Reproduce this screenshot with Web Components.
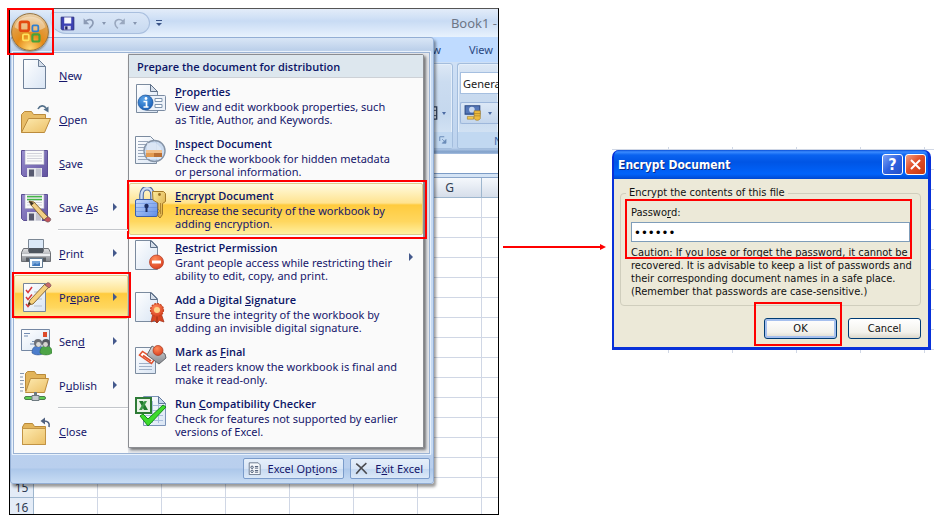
<!DOCTYPE html>
<html lang="en">
<head>
<meta charset="utf-8">
<title>Encrypt a workbook</title>
<style>
  body{
    margin: 0;
    background: #fff;
    font-family: "Noto Sans", "Open Sans", sans-serif;
    font-size: 11px;
    color: #15166b;
  }
  main{
    display: grid;
    grid-template-columns: 490fr 113fr 322fr;
    padding: 8px 11px 0 9px;
    align-items: start;
  }
  step-arrow{ margin-top: 235px; }
  encrypt-dialog{ margin-top: 139px; }
</style>
</head>
<body>
<main>
  <excel-window></excel-window>
  <step-arrow></step-arrow>
  <encrypt-dialog></encrypt-dialog>
</main>

<script>
const page = `<path d="M4.500 1.500h15l7 7v22h-22z" transform="translate(-1 -1)" fill="url(#pg)" stroke="#6f8199"/><path d="M18.500.500v7h7z" fill="#d5deea" stroke="#6f8199" stroke-linejoin="round"/>`;
const smallPage = `<path d="M.500 1.500h16l6 6v23h-22z" fill="url(#pg)" stroke="#7b8b9f"/><path d="M15.500 1.500v7h7z" fill="#d5deea" stroke="#5f7088" stroke-linejoin="round"/>`;
const floppy = `<path d="M1.500 3.500h26v26h-24l-2-2z" fill="url(#vi)" stroke="#5c4f94"/><path d="M5 3.500h19v14H5z" fill="#fafafa" stroke="#aaa9c0" stroke-width=".6"/><path d="M7 6.500h15M7 9h15M7 11.500h15M7 14h15" stroke="#d2d2da"/><path d="M7 21h15v9H7z" fill="#e3e4ea"/><path d="M9 22.500h5v7H9z" fill="#575a70"/><path d="M16 21.500h5v8h-5z" fill="#c2c4d0"/>`;

// every picture is drawn on a 32 x 32 box
const icons = {
  new: page,
  open: `<path d="M1.500 29.500v-18l3-3h7l2 3h12v5" fill="#e8bd68" stroke="#bb8b3c"/><path d="M1.500 29.500l7-14h22l-6 14z" fill="url(#fo)" stroke="#bb8b3c"/><path d="M18 6c2-4 6-4 8-1" fill="none" stroke="#54708a" stroke-width="1.600"/><path d="M23.500 6.500l5-3v6z" fill="#54708a"/>`,
  save: floppy,
  saveas: floppy + `<path d="M7 8.500h15M7 5.500h15" stroke="#45b649" stroke-width="1.300"/><path d="M9 10l5 1 14 15-4 3-13-15z" fill="#f2cf84" stroke="#7e5c2a" stroke-width=".9"/><path d="M9 10l5 2-2.500 2.500z" fill="#3b3024"/><path d="M24 29l4-3.500 2.500 2c1 2-1.500 4-3.500 3.500z" fill="#c3535a" stroke="#6d5a5d" stroke-width=".7"/>`,
  print: `<path d="M8.500 12V2.500h15V12z" fill="#dbe8f7" stroke="#7b8794"/><path d="M3.500 11.500h5v3h15v-3h5l2 4v9h-29v-9z" fill="url(#gr)" stroke="#6c6f74"/><path d="M9 11h14v5H9z" fill="#4e555e"/><path d="M2 17h28v2H2z" fill="#eceef0"/><path d="M6 20.500h20v4H6z" fill="#565b61"/><path d="M9.500 21.500h13v9h-13z" fill="#fafdff" stroke="#60788f"/><path d="M12 24h8v5h-8z" fill="#7aa7d9"/><path d="M12 29l3-3 2 1.500 3-2v3.500z" fill="#3e78bd"/>`,
  prepare: `<path d="M3.500 2.500h22v28h-22z" fill="url(#pg)" stroke="#77869a"/><path d="M6 9l2 2.500L12 6M6 16l2 2.500 4-5M6 23l2 2.500 4-5" fill="none" stroke="#d8383b" stroke-width="1.500"/><path d="M14 11h8M14 18h8M14 25h8" stroke="#b8c1cf"/><path d="M8 24l2-5L25 3l4 3-16 17z" fill="#f6d17d" stroke="#80602c" stroke-width=".9"/><path d="M8 24l1-3 2 1.500z" fill="#33291d"/><path d="M25 4l2-2c2-1 4 1 4 3l-2 2z" fill="#c8686b" stroke="#735357" stroke-width=".7"/>`,
  send: `<path d="M1.500 4.500h28v21h-28z" fill="url(#pg)" stroke="#7487a3"/><path d="M4 8.500h6M4 11h4M12 16.500h10M10 19h7" stroke="#728cb2" stroke-width="1.200"/><path d="M23 7h4v5h-4z" fill="#dc4a2b"/><path d="M12 28c0-5 2-7 6-7s6 2 6 7c-3 2.500-9 2.500-12 0z" fill="#4c7dcc" stroke="#2d5390" stroke-width=".6"/><circle cx="18" cy="18" r="4" fill="#6c6f76"/><circle cx="18.500" cy="19.500" r="2.400" fill="#dcdbd8"/><path d="M20 28c0-5 2-7 6-7s6 2 6 7c-3 2.500-9 2.500-12 0z" fill="#4da446" stroke="#2c7529" stroke-width=".6"/><circle cx="26" cy="18" r="4" fill="#555960"/><circle cx="25.500" cy="19.500" r="2.400" fill="#d6d4cf"/>`,
  publish: `<path d="M0 4.500h4M0 8h3M0 11.500h4M0 15h3M0 18.500h4M0 22h3" stroke="#8596ae"/><path d="M5.500 22V4.500l2-2h7l2 3h9v4" fill="#e2b45a" stroke="#b98a3a"/><path d="M5.500 23.500l5-14h18l-4 14z" fill="url(#fo)" stroke="#bb8b3c"/><path d="M15.500 23v6" stroke="#6e7a80" stroke-width="3"/><rect x="4.500" y="27.500" width="21" height="3" rx="1.500" fill="#5fcf52" stroke="#4c7b4e"/><path d="M12 26.500h7v5h-7z" fill="#c3c9ce" stroke="#6e7a80"/>`,
  close: `<path d="M2.500 12l2-3.500h8l2 3h11v18h-23z" fill="#e2b45a" stroke="#b98a3a"/><path d="M2.500 13.500h23v16h-23z" fill="url(#fo)" stroke="#c19344"/><path d="M29 12c1-4-1-6-5-6" fill="none" stroke="#4e6080" stroke-width="1.600"/><path d="M25 2.500v7L20.500 6z" fill="#4e6080"/>`,
  properties: `<path d="M1.500 1.500h14l7 7v21h-21z" fill="url(#pg)" stroke="#7b8b9f"/><path d="M15.500 1.500v7h7z" fill="#d5deea" stroke="#5f7088"/><rect x="10.500" y="12.500" width="20" height="15" rx="1" fill="#edf2f9" stroke="#7b8ca3"/><path d="M20 15.500h7v3h-7zM20 21.500h7v3h-7z" fill="#fff" stroke="#7d93ad"/><circle cx="10.500" cy="19.500" r="7.500" fill="url(#bl)" stroke="#1a5198" stroke-width=".7"/><circle cx="11" cy="15.500" r="1.400" fill="#fff"/><path d="M8.500 18.500h3v5M8.500 24h5" fill="none" stroke="#fff" stroke-width="1.700"/>`,
  inspect: `<path d="M.500 1.500h15l6 6v21h-21z" fill="url(#pg)" stroke="#7b8b9f"/><path d="M3 6.500h10M3 9.500h10M3 12.500h8M3 15.500h8M3 18.500h8M3 21.500h9M3 24.500h12" stroke="#9aa7ba"/><circle cx="19.500" cy="16" r="10.500" fill="#c4d6ee" fill-opacity=".88" stroke="#8593a6" stroke-width="1.400"/><path d="M12 8h9l5 5v11H12z" fill="#e8eff8" fill-opacity=".6"/><path d="M11 15h16v7H11z" fill="#e19a52"/><path d="M11 15h16v3H11z" fill="#f2c08b"/><path d="M19 18h8v4h-8z" fill="#b96f35"/>`,
  encrypt: `<path d="M6.500 14V8c0-9 11-9 11 0v6" fill="none" stroke="#4a6aa6" stroke-width="4.600"/><path d="M6.500 14V8c0-9 11-9 11 0v6" fill="none" stroke="#cfdcf2" stroke-width="2.400"/><rect x=".500" y="12.500" width="22" height="17" rx="1.500" fill="url(#lk)" stroke="#3b5fae"/><path d="M1 16.500h21M1 20.500h21M1 24.500h21" stroke="#5b86dc" stroke-opacity=".5"/><circle cx="11.500" cy="19" r="2.200" fill="#1c2d62"/><path d="M10.500 19h2v6h-2z" fill="#1c2d62"/><path d="M17.500 4.500h11l2 2v8l-3 2v11l-2.500 3.500-2-2v-3l1.500-2-1.500-2v-6l-5-3z" fill="url(#ky)" stroke="#a57a26"/><circle cx="24.500" cy="7.500" r="1.400" fill="#9a6f22"/><path d="M25.500 16v11" stroke="#b2862f"/>`,
  restrict: smallPage + `<circle cx="21.500" cy="23" r="7" fill="url(#rd)" stroke="#b3371f" stroke-width=".7"/><path d="M17 21.500h9v3h-9z" fill="#fff"/>`,
  signature: smallPage + `<path d="M18 22l-2 9 3.500-1.500L22 32v-7 7l2.500-2.500L29 31l-3-9z" fill="#d84622" stroke="#a03119" stroke-width=".7"/><circle cx="22" cy="19" r="6.500" fill="url(#rd)" stroke="#c4431f" stroke-width="1.200" stroke-dasharray="2 1"/><circle cx="22" cy="19" r="3" fill="#ffd489"/>`,
  final: `<path d="M.500 4.500h20v26h-20z" fill="url(#pg)" stroke="#7b8b9f"/><path d="M4 20.500h13M4 23.500h13M4 26.500h13" stroke="#9fb0c7"/><path d="M4.500 12l3-3.500 12 8-3 4z" fill="#fff" stroke="#e2502d" stroke-width="1.500"/><path d="M8 12.500l8 5.500" stroke="#e2502d" stroke-width="2"/><path d="M17 3l13 8 1 4-7 6-12-9z" fill="url(#gr)" stroke="#65686d"/><circle cx="23" cy="7.500" r="5" fill="url(#rd)" stroke="#a8351b" stroke-width=".7"/>`,
  compat: `<path d="M8.500 1.500h15l7 7v22h-22z" fill="url(#pg)" stroke="#7b93b8"/><path d="M23.500 1.500v7h7z" fill="#c6d6ec" stroke="#62799d"/><path d="M10 10.500h18M10 15.500h18M10 20.500h18M10 25.500h18M17.500 6v22M23.500 9v19" stroke="#a9bedd"/><rect x="1" y="3" width="15" height="15" fill="#eaf3e8" stroke="#2d7a35" stroke-width="2"/><path d="M4 6h4l5 9H9z" fill="#217a2c"/><path d="M12 6H9.500L4 15h3z" fill="#3c9947"/><path d="M5 21l3-2 5 5L28 10l3 2-18 19z" fill="#3ddb2c" stroke="#178a1b"/>`,
  office: `<circle cx="16" cy="16" r="15.500" fill="url(#ob)" stroke="#8f6a35" stroke-width=".8"/><path d="M3 12C6 0 26 0 29 12c-7 5-19 5-26 0z" fill="#fff" fill-opacity=".38"/><g fill="none"><rect x="7.500" y="7.500" width="7.500" height="7.500" rx="1.500" stroke="#e34a10" stroke-width="2.200"/><rect x="18" y="10.500" width="5" height="5" rx="1" stroke="#2f7fd0" stroke-width="1.500"/><rect x="10" y="18" width="5" height="5" rx="1" stroke="#ffe25c" stroke-width="1.500"/><rect x="18" y="18" width="6" height="6" rx="1.300" stroke="#48a33a" stroke-width="1.800"/></g>`,
  disk: `<path d="M2.500 2.500h27v27h-25l-2-2z" fill="#3c41b4" stroke="#272b7e" stroke-width="2"/><path d="M9 3h15v13H9z" fill="#f7f8ff"/><path d="M9 21h14v8H9z" fill="#d6d8ef"/><path d="M11 22h5v7h-5z" fill="#20235e"/>`,
  undo: `<path d="M9 10c10-7 19-3 18 6-1 6-5 9-9 12" fill="none" stroke="#8c9bb5" stroke-width="4"/><path d="M4 3v15h14z" fill="#8c9bb5"/>`,
  redo: `<path d="M25 10C15 3 5 6 5 16c0 6 3 9 7 12" fill="none" stroke="#9aa8bf" stroke-width="4"/><path d="M29 3v15H15z" fill="#9aa8bf"/>`,
  currency: `<path d="M2 3h26v15H2z" fill="#5577b8" stroke="#2f4c86" stroke-width="2"/><circle cx="14" cy="10" r="5" fill="#c6d7f1"/><path d="M18 12h11v14c-3 4-8 4-11 0z" fill="#edbb3e" stroke="#9b7421"/><path d="M18 17h11M18 21h11" stroke="#9b7421"/><path d="M6 22h11v5H6z" fill="#f3c94f" stroke="#9b7421"/>`,
  merge: `<path d="M2 2h27v28H2z" fill="#e9f1fb" stroke="#33415c" stroke-width="3"/><path d="M2 10h27M2 22h27" stroke="#33415c" stroke-width="2"/>`,
  options: `<path d="M3 2h22l5 5v24H3z" fill="#f5f8fc" stroke="#55647a" stroke-width="2"/><circle cx="10" cy="13" r="3" fill="none" stroke="#2d3f5c" stroke-width="2"/><circle cx="10" cy="23" r="3" fill="none" stroke="#2d3f5c" stroke-width="2"/><path d="M17 11h8M17 15h8M17 21h8M17 25h8" stroke="#2d3f5c" stroke-width="2"/>`,
  exit: `<path d="M3 4c9 7 16 14 26 25M28 3C18 11 11 19 3 29" fill="none" stroke="#4b4b50" stroke-width="4"/>`,
  launcher: `<path d="M3 20V3h18" fill="none" stroke="#6a8bb8" stroke-width="4"/><path d="M12 12l12 12M28 14v15H13z" fill="#6a8bb8" stroke="#6a8bb8" stroke-width="3"/>`
};

const gradients = `
<linearGradient id="pg" x2="1" y2="1"><stop stop-color="#fff"/><stop offset="1" stop-color="#d9e5f4"/></linearGradient>
<linearGradient id="vi" x2="1" y2="1"><stop stop-color="#9a8fd0"/><stop offset="1" stop-color="#6253a0"/></linearGradient>
<linearGradient id="fo" x2="1" y2="1"><stop stop-color="#fdeab0"/><stop offset="1" stop-color="#ecc066"/></linearGradient>
<linearGradient id="gr" x2="0" y2="1"><stop stop-color="#dfe0e2"/><stop offset="1" stop-color="#84888e"/></linearGradient>
<linearGradient id="lk" x2="1" y2="1"><stop stop-color="#c8dafb"/><stop offset="1" stop-color="#5c8be6"/></linearGradient>
<linearGradient id="ky" x2="1" y2="1"><stop stop-color="#fdeb9c"/><stop offset="1" stop-color="#d5a238"/></linearGradient>
<radialGradient id="bl" cx=".4" cy=".3" r=".8"><stop stop-color="#5ba5ea"/><stop offset="1" stop-color="#1257b0"/></radialGradient>
<radialGradient id="rd" cx=".4" cy=".3" r=".8"><stop stop-color="#ff8c5a"/><stop offset="1" stop-color="#d63a1c"/></radialGradient>
<radialGradient id="ob" cx=".5" cy=".95" r=".95"><stop stop-color="#ffd873"/><stop offset=".4" stop-color="#e58a17"/><stop offset=".75" stop-color="#e0a04a"/><stop offset="1" stop-color="#ead9bd"/></radialGradient>`;

class AppIcon extends HTMLElement{
  constructor(){
    super();
    this.attachShadow({mode:"open"});
  }
  connectedCallback(){
    const size = this.getAttribute("size") || 32;
    this.shadowRoot.innerHTML = `
      <style>
        :host{ display: block; flex: none; width: ${size}px; height: ${size}px; }
        svg{ display: block; }
      </style>
      <svg width="${size}" height="${size}" viewBox="0 0 32 32" aria-hidden="true"><defs>${gradients}</defs>${icons[this.getAttribute("name")]}</svg>`;
  }
}
customElements.define("app-icon", AppIcon);

// red outline laid over whatever the reader has to click
class RedFrame extends HTMLElement{
  constructor(){
    super();
    this.attachShadow({mode:"open"});
    this.shadowRoot.innerHTML = `
      <style>
        :host{ display: block; position: absolute; z-index: 5; border: 2px solid #f00; box-sizing: border-box; pointer-events: none; }
      </style>`;
  }
}
customElements.define("red-frame", RedFrame);

class StepArrow extends HTMLElement{
  constructor(){
    super();
    this.attachShadow({mode:"open"});
    this.shadowRoot.innerHTML = `
      <style>
        :host{ display: flex; align-items: center; height: 7px; padding: 0 6px 0 4px; }
        .line{ flex: 1; height: 2px; background: #f00; }
        .head{ border: 3px solid transparent; border-left: 6px solid #f00; border-right: 0; }
      </style>
      <div class="line"></div><div class="head"></div>`;
  }
}
customElements.define("step-arrow", StepArrow);

class MenuItem extends HTMLElement{
  constructor(){
    super();
    this.attachShadow({mode:"open"});
  }
  connectedCallback(){
    this.shadowRoot.innerHTML = `
      <style>
        :host{ display: block; position: relative; }
        button{
          display: flex; align-items: center; gap: 7px;
          width: 100%; height: 44px; box-sizing: border-box;
          padding: 0 10px 0 5px; border: 1px solid transparent; border-radius: 2px;
          background: none; font: inherit; color: inherit; text-align: left;
        }
        .label{ flex: 1; white-space: nowrap; }
        .more{ border: 4px solid transparent; border-left: 4px solid #44598c; border-right: 0; }
        :host([active]) button{
          border-color: #e3cf8c;
          background: linear-gradient(#fffbe0, #ffe38f 38%, #ffcb3e 42%, #ffd75f 75%, #fff0a0);
        }
        hr{ margin: 0 0 0 44px; border: 0; border-top: 1px solid #c3c6cb; border-bottom: 1px solid #fff; }
        red-frame{ inset: -3px -3px 1px -2px; }
      </style>
      <button type="button">
        <app-icon name="${this.getAttribute("icon")}"></app-icon>
        <span class="label"><slot></slot></span>
        ${this.hasAttribute("more") ? `<span class="more"></span>` : ""}
      </button>
      ${this.hasAttribute("divided") ? "<hr>" : ""}
      ${this.hasAttribute("active") ? "<red-frame></red-frame>" : ""}`;
  }
}
customElements.define("menu-item", MenuItem);

class TaskItem extends HTMLElement{
  constructor(){
    super();
    this.attachShadow({mode:"open"});
  }
  connectedCallback(){
    this.shadowRoot.innerHTML = `
      <style>
        :host{ display: block; position: relative; }
        button{
          display: flex; gap: 8px;
          width: 100%; height: 52px; box-sizing: border-box;
          padding: 3px 9px 0 5px; border: 1px solid transparent; border-radius: 2px;
          background: none; font: inherit; color: inherit; text-align: left;
        }
        .text{ flex: 1; white-space: nowrap; }
        .title{ display: block; font: 600 11px/17px "Open Sans", "Noto Sans", sans-serif; color: #0b1566; }
        .about{ display: block; line-height: 13px; white-space: pre-line; }
        .more{ margin-top: 14px; align-self: flex-start; border: 4px solid transparent; border-left: 4px solid #44598c; border-right: 0; }
        :host([active]) button{
          border-color: #dfcc8a;
          background: linear-gradient(#fffbe0, #ffe38f 38%, #ffcb3e 42%, #ffd75f 75%, #fff0a0);
        }
        red-frame{ inset: -3px -4px -4px -2px; }
      </style>
      <button type="button">
        <app-icon name="${this.getAttribute("icon")}"></app-icon>
        <span class="text">
          <span class="title"><slot name="title"></slot></span>
          <span class="about"><slot></slot></span>
        </span>
        ${this.hasAttribute("more") ? `<span class="more"></span>` : ""}
      </button>
      ${this.hasAttribute("active") ? "<red-frame></red-frame>" : ""}`;
  }
}
customElements.define("task-item", TaskItem);

class OfficeMenu extends HTMLElement{
  constructor(){
    super();
    this.attachShadow({mode:"open"});
    this.shadowRoot.innerHTML = `
      <style>
        :host{
          display: block; box-sizing: border-box; padding: 0 3px 0 2px;
          border: 1px solid #93aed4; border-radius: 3px;
          background: linear-gradient(#d9e6f6, #bcd0ea 12px, #c6daf3 16px, #c6daf3 calc(100% - 30px), #bad0ee calc(100% - 28px), #b9cfee calc(100% - 15px), #acc7ea calc(100% - 14px), #c8dcf4);
          box-shadow: 2px 3px 3px rgba(0,0,0,.4);
        }
        .cap{ height: 14px; }
        .body{
          display: grid; grid-template-columns: 114px 1fr;
          border: 1px solid #9bb3d4; background: #fafafa;
          box-shadow: 0 0 0 1px #e9f2fc;
        }
        .side{ padding: 1px 5px 5px 0; background: #e6e8ec; position: relative; z-index: 1; }
        .panel{ border: 1px solid #8b8d92; background: #fafafa; box-shadow: 2px 2px 3px rgba(0,0,0,.5); border-radius: 0 2px 0 0; }
        h2{
          margin: 0 0 1px; padding: 0 8px; height: 22px;
          border-bottom: 1px solid #cdd1d6; background: #dde7ee;
          font: 600 11px/23px "Open Sans", "Noto Sans", sans-serif; color: #0b1566;
        }
        .tasks{ padding-bottom: 4px; }
        nav{ position: relative; z-index: 2; }
        footer{ display: flex; justify-content: flex-end; gap: 6px; padding: 4px 0; }
        footer button{
          display: flex; align-items: center; gap: 7px; height: 21px; padding: 0 6px 0 4px;
          border: 1px solid #7b9ccb; border-radius: 2px;
          background: linear-gradient(#e6effa, #d9e6f7 50%, #c6d9f1 52%, #dce9f8);
          font: inherit; color: inherit; white-space: nowrap;
        }
      </style>
      <div class="cap"></div>
      <div class="body">
        <nav>
          <menu-item icon="new"><u>N</u>ew</menu-item>
          <menu-item icon="open"><u>O</u>pen</menu-item>
          <menu-item icon="save"><u>S</u>ave</menu-item>
          <menu-item icon="saveas" more divided>Save <u>A</u>s</menu-item>
          <menu-item icon="print" more><u>P</u>rint</menu-item>
          <menu-item icon="prepare" more active>Pr<u>e</u>pare</menu-item>
          <menu-item icon="send" more>Sen<u>d</u></menu-item>
          <menu-item icon="publish" more divided>P<u>u</u>blish</menu-item>
          <menu-item icon="close"><u>C</u>lose</menu-item>
        </nav>
        <div class="side">
          <div class="panel">
            <h2>Prepare the document for distribution</h2>
            <div class="tasks">
              <task-item icon="properties"><span slot="title"><u>P</u>roperties</span>View and edit workbook properties, such
as Title, Author, and Keywords.</task-item>
              <task-item icon="inspect"><span slot="title"><u>I</u>nspect Document</span>Check the workbook for hidden metadata
or personal information.</task-item>
              <task-item icon="encrypt" active><span slot="title"><u>E</u>ncrypt Document</span>Increase the security of the workbook by
adding encryption.</task-item>
              <task-item icon="restrict" more><span slot="title"><u>R</u>estrict Permission</span>Grant people access while restricting their
ability to edit, copy, and print.</task-item>
              <task-item icon="signature"><span slot="title">Add a Digital <u>S</u>ignature</span>Ensure the integrity of the workbook by
adding an invisible digital signature.</task-item>
              <task-item icon="final"><span slot="title">Mark as <u>F</u>inal</span>Let readers know the workbook is final and
make it read-only.</task-item>
              <task-item icon="compat"><span slot="title">Run <u>C</u>ompatibility Checker</span>Check for features not supported by earlier
versions of Excel.</task-item>
            </div>
          </div>
        </div>
      </div>
      <footer>
        <button type="button"><app-icon name="options" size="13"></app-icon><span>Excel Opt<u>i</u>ons</span></button>
        <button type="button"><app-icon name="exit" size="13"></app-icon><span>E<u>x</u>it Excel</span></button>
      </footer>`;
  }
}
customElements.define("office-menu", OfficeMenu);

class SheetGrid extends HTMLElement{
  constructor(){
    super();
    this.attachShadow({mode:"open"});
  }
  connectedCallback(){
    // the menu covers everything else, so only these heads carry a label
    const cols = ["", "", "", "", "", "", "G", ""];
    let rows = "";
    for(let i = 1; i <= 16; i++){
      rows += `<tr><th scope="row">${i > 14 ? i : ""}</th>${"<td></td>".repeat(8)}</tr>`;
    }
    this.shadowRoot.innerHTML = `
      <style>
        :host{ display: block; }
        table{ width: 536px; table-layout: fixed; border-collapse: separate; border-spacing: 0; }
        th, td{ height: 20px; box-sizing: border-box; padding: 0; border: solid #d0d7e5; border-width: 0 1px 1px 0; }
        th{ font-weight: 400; font-size: 12px; line-height: 19px; color: #303d52; background: #e4ecf7; border-color: #9eb6ce; }
        thead th{ background: linear-gradient(#f5f8fc, #d6deea); }
        col.head{ width: 24px; }
      </style>
      <table>
        <colgroup><col class="head"><col span="8"></colgroup>
        <thead><tr><th></th>${cols.map(c => `<th scope="col">${c}</th>`).join("")}</tr></thead>
        <tbody>${rows}</tbody>
      </table>`;
  }
}
customElements.define("sheet-grid", SheetGrid);

class ExcelWindow extends HTMLElement{
  constructor(){
    super();
    this.attachShadow({mode:"open"});
    this.shadowRoot.innerHTML = `
      <style>
        :host{ display: block; position: relative; min-width: 0; }
        .window{
          position: relative; box-sizing: border-box; height: calc(100vh - 21px); overflow: hidden;
          border: 1px solid #000; border-top-color: #555; background: #fff;
        }
        .titlebar{
          display: flex; align-items: center; height: 28px; padding: 0 1px 0 40px;
          background: linear-gradient(#e3ecf9, #d2e2f6 8px, #c8dbf4 12px, #e8f2fd);
        }
        .quick{
          display: flex; align-items: center; gap: 7px; height: 20px; padding: 0 12px 0 9px;
          border: 1px solid #a9bfde; border-left-color: #c9d9ee; border-radius: 4px 11px 11px 16px;
          background: linear-gradient(#dbe7f7, #c7d9f0);
        }
        .drop{ border: 2px solid transparent; border-top: 3px solid #8796b0; border-bottom: 0; }
        .custom{ margin-left: 6px; border-top: 1px solid #3a5488; padding-top: 2px; }
        .custom i{ display: block; border: 3px solid transparent; border-top: 3px solid #3a5488; border-bottom: 0; }
        h1{ margin: 0 0 0 auto; font-size: 13px; font-weight: 400; line-height: 28px; color: #6d7686; white-space: nowrap; }
        .tabs{ display: flex; justify-content: flex-end; gap: 28px; padding-right: 5px; height: 25px; background: #bfdbff; }
        .tabs a{ line-height: 25px; color: #29477f; text-decoration: none; }
        .ribbon{
          display: flex; justify-content: flex-end; gap: 4px; height: 86px; padding: 1px 0 5px;
          background: linear-gradient(#cfe0f5, #bdd3ee 86px, #7f9fc8 90px, #a9c1e2);
        }
        .group{
          display: flex; flex-direction: column; box-sizing: border-box;
          border: 1px solid #a3bddd; border-radius: 3px; box-shadow: inset 0 0 0 1px #e5effa;
          background: linear-gradient(#dde8f5, #cbdcf0 18px, #c5d8ee 50px, #dce9f7);
        }
        .align{ width: 90px; }
        .number{ width: 41px; border-right: 0; border-radius: 3px 0 0 3px; overflow: hidden; }
        .controls{ flex: 1; display: flex; flex-direction: column; align-items: flex-end; gap: 8px; padding: 8px 0 0 2px; }
        .number .controls{ align-items: stretch; }
        .label{ display: flex; align-items: center; height: 16px; background: #c1d8f1; color: #3e6aaa; }
        .align .label{ justify-content: flex-end; padding-right: 5px; }
        .number .label{ padding-left: 36px; }
        select{
          appearance: none; height: 22px; margin: 0; padding: 0 0 0 2px; box-sizing: border-box;
          border: 1px solid #a5bfe0; border-right: 0; border-radius: 0; background: #fff;
          font: inherit; color: #222; overflow: hidden; text-overflow: clip;
        }
        .coin{
          display: flex; align-items: center; gap: 6px; height: 22px; padding: 0 3px; box-sizing: border-box;
          border: 1px solid #9db7db; border-right: 0; border-radius: 2px 0 0 2px; background: linear-gradient(#dce8f6, #c4d6ec);
        }
        .spacer{ height: 22px; }
        .merge{ display: flex; align-items: center; gap: 4px; height: 22px; padding-right: 6px; }
        .blue{ border-top-color: #4c6ba3; }
        .formula{ box-sizing: border-box; height: 24px; background: linear-gradient(#fff 19px, #7c9cc6 19px, #7c9cc6 20px, #d5e4f5 20px, #d5e4f5 23px, #8ba6ca 23px); }
        office-menu{ position: absolute; left: 0; right: 64px; top: 28px; z-index: 2; }
        .orb{ position: absolute; left: 1px; top: 4px; z-index: 3; padding: 0; border: 0; border-radius: 50%; background: none; box-shadow: 0 1px 2px rgba(60,50,30,.6); }
        red-frame{ left: -2px; top: 0; width: 47px; height: 47px; }
      </style>
      <div class="window">
        <div class="titlebar">
          <div class="quick">
            <app-icon name="disk" size="15"></app-icon>
            <app-icon name="undo" size="13"></app-icon>
            <i class="drop"></i>
            <app-icon name="redo" size="13"></app-icon>
            <i class="drop"></i>
          </div>
          <div class="custom"><i></i></div>
          <h1>Book1 -</h1>
        </div>
        <div class="tabs"><a href="#review">Review</a><a href="#view">View</a></div>
        <div class="ribbon">
          <div class="group align">
            <div class="controls">
              <div class="spacer"></div>
              <div class="merge"><app-icon name="merge" size="14"></app-icon><i class="drop blue"></i></div>
            </div>
            <div class="label"><app-icon name="launcher" size="8"></app-icon></div>
          </div>
          <div class="group number">
            <div class="controls">
              <select aria-label="Number format"><option>General</option></select>
              <div class="coin"><app-icon name="currency" size="18"></app-icon><i class="drop blue"></i></div>
            </div>
            <div class="label">Number</div>
          </div>
        </div>
        <div class="formula"></div>
        <sheet-grid></sheet-grid>
        <office-menu></office-menu>
        <button class="orb" type="button" aria-label="Office Button"><app-icon name="office" size="38"></app-icon></button>
      </div>
      <red-frame></red-frame>`;
  }
}
customElements.define("excel-window", ExcelWindow);

class EncryptDialog extends HTMLElement{
  constructor(){
    super();
    this.attachShadow({mode:"open"});
    this.shadowRoot.innerHTML = `
      <style>
        :host{
          display: block; min-width: 0; padding: 3px 3px 3px 0;
          background:
            repeating-linear-gradient(#fff 0 2px, #d0d7e5 2px 3px, #fff 3px 20px) right / 3px 100% no-repeat,
            linear-gradient(#d0d7e5, #d0d7e5) 0 2px / 100% 1px no-repeat,
            repeating-linear-gradient(90deg, #fff 0 56px, #d0d7e5 56px 57px, #fff 57px 64px);
          font: 11px/13px "DejaVu Sans Condensed", "DejaVu Sans", sans-serif; color: #111;
        }
        .dialog{ border: solid #0831d9; border-width: 0 3px 3px 2px; border-radius: 7px 7px 0 0; background: #0831d9; }
        header{
          display: flex; align-items: center; gap: 2px; height: 29px; padding: 0 2px 0 4px;
          border-radius: 6px 6px 0 0;
          background: linear-gradient(#0a50d8, #3a8bff 2px, #0a63f0 5px, #0055e5 12px, #0063fb 24px, #0048d0);
        }
        h1{ flex: 1; margin: 0; font-size: 12px; line-height: 30px; color: #fff; text-shadow: 1px 1px #0a2a88; white-space: nowrap; }
        header button{
          display: flex; align-items: center; justify-content: center; width: 21px; height: 21px; padding: 0;
          border: 1px solid #fff; border-radius: 3px;
          background: linear-gradient(135deg, #7da2f5, #2f62e0 50%, #2450c8);
          font: 700 16px/18px "DejaVu Sans Condensed", sans-serif; color: #fff;
        }
        header .x{ background: linear-gradient(135deg, #f0a084, #e1502a 45%, #c8380f); }
        form{ padding: 7px 7px 8px 6px; background: #ece9d8; }
        fieldset{ position: relative; min-width: 0; margin: 0; padding: 6px 10px 7px; border: 1px solid #d0cebd; border-radius: 4px; }
        legend{ margin-left: -5px; padding: 0 3px; line-height: 14px; }
        label{ display: block; margin-bottom: 2px; line-height: 14px; }
        input{
          display: block; width: 100%; height: 20px; box-sizing: border-box; padding: 0 2px;
          border: 1px solid #7f9db9; border-radius: 0; background: #fff; font: 13px "DejaVu Sans Condensed", sans-serif; color: #000;
        }
        p{ margin: 4px -6px 0 0; white-space: pre-line; }
        .buttons{ display: flex; justify-content: flex-end; gap: 11px; margin-top: 12px; }
        .buttons button{
          width: 73px; height: 21px; padding: 0; border: 1px solid #003c74; border-radius: 3px;
          background: linear-gradient(#fff, #f3f2ec 70%, #dcd8cb); font: inherit; color: inherit;
        }
        .buttons .ok{ box-shadow: inset 0 0 0 2px #a6c0ee; }
        .spot{ display: flex; position: relative; }
        .pw{ inset: -1px 8px auto 4px; height: 60px; }
        .spot red-frame{ inset: -16px -5px -7px -10px; }
      </style>
      <div class="dialog">
        <header>
          <h1>Encrypt Document</h1>
          <button type="button" aria-label="Help">?</button>
          <button class="x" type="button" aria-label="Close">
            <svg width="13" height="13" viewBox="0 0 13 13"><path d="M2 2l9 9M11 2l-9 9" stroke="#fff" stroke-width="2"/></svg>
          </button>
        </header>
        <form>
          <fieldset>
            <legend>Encrypt the contents of this file</legend>
            <label for="pw">Passwo<u>r</u>d:</label>
            <input id="pw" type="password" value="abcdef">
            <p>Caution: If you lose or forget the password, it cannot be
recovered. It is advisable to keep a list of passwords and
their corresponding document names in a safe place.
(Remember that passwords are case-sensitive.)</p>
            <red-frame class="pw"></red-frame>
          </fieldset>
          <div class="buttons">
            <span class="spot"><button class="ok" type="button">OK</button><red-frame></red-frame></span>
            <button type="button">Cancel</button>
          </div>
        </form>
      </div>`;
  }
}
customElements.define("encrypt-dialog", EncryptDialog);
</script>
</body>
</html>
